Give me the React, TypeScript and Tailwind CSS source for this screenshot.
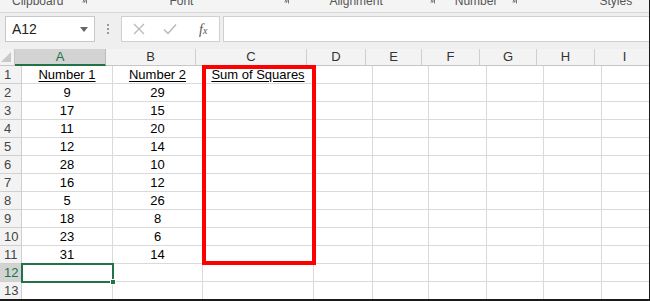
const colA = ["Number 1", "9", "17", "11", "12", "28", "16", "5", "18", "23", "31"];
const colB = ["Number 2", "29", "15", "20", "14", "10", "12", "26", "8", "6", "14"];
const letters = ["A", "B", "C", "D", "E", "F", "G", "H", "I"];
const widths = ["w-[91px]", "w-[90px]", "w-[111px]", "w-[59px]", "w-[56px]", "w-[58px]", "w-[57px]", "w-[58px]", "w-[60px]"];
const rows = Array.from({ length: 13 }, (_, i) => i + 1);

function Launcher() {
  return (
    <svg width="8" height="8" viewBox="0 0 8 8" className="mt-[1px]">
      <path d="M0.5 0.5h7v7" fill="none" stroke="#777" strokeWidth="1" />
      <path d="M2 2l4 4M3.5 6H6V3.5" fill="none" stroke="#777" strokeWidth="1" />
    </svg>
  );
}

function Corner() {
  return (
    <svg width="12" height="12" viewBox="0 0 12 12">
      <path d="M11 1V11H1Z" fill="#c8c8c8" />
    </svg>
  );
}

export default function App() {
  return (
    <div
      className="relative h-[301px] w-[650px] overflow-hidden bg-white border-r border-b-2 border-[#1a1a1a]"
      style={{ fontFamily: "'Liberation Sans', Arial, sans-serif" }}
    >
      {/* ribbon group labels, cut at top */}
      <div className="flex h-[13px] items-start overflow-hidden border-b border-[#d6d6d6] bg-[#f4f4f4] text-[12px] leading-[12px] text-[#555]">
        <div className="-mt-[5px] flex items-start">
          <span className="ml-[12px]">Clipboard</span>
          <span className="ml-[16px]"><Launcher /></span>
          <span className="ml-[82px]">Font</span>
          <span className="ml-[88px]"><Launcher /></span>
          <span className="ml-[40px]">Alignment</span>
          <span className="ml-[44px]"><Launcher /></span>
          <span className="ml-[20px]">Number</span>
          <span className="ml-[12px]"><Launcher /></span>
          <span className="ml-[82px]">Styles</span>
        </div>
      </div>

      {/* formula bar */}
      <div className="flex h-[36px] items-start bg-[#efefef] pt-[3px]">
        <div className="ml-[5px] flex h-[26px] w-[90px] items-center justify-between border border-[#c8c8c8] bg-white pl-[6px] pr-[6px] text-[14px] text-[#222]">
          <span>A12</span>
          <svg width="8" height="5" viewBox="0 0 8 5">
            <path d="M0 0h8L4 5z" fill="#666" />
          </svg>
        </div>
        <div className="ml-[12px] flex h-[26px] flex-col items-center justify-center gap-[2px]">
          <span className="h-[2px] w-[2px] bg-[#999]" />
          <span className="h-[2px] w-[2px] bg-[#999]" />
          <span className="h-[2px] w-[2px] bg-[#999]" />
        </div>
        <div className="ml-[12px] flex h-[26px] w-[99px] items-center border border-[#d0d0d0] bg-white">
          <svg width="12" height="12" viewBox="0 0 12 12" className="ml-[11px]">
            <path d="M1 1l10 10M11 1L1 11" stroke="#b8b8b8" strokeWidth="1.3" />
          </svg>
          <svg width="14" height="12" viewBox="0 0 14 12" className="ml-[18px]">
            <path d="M1 6.5l4 4L13 1.5" fill="none" stroke="#b8b8b8" strokeWidth="1.4" />
          </svg>
          <span
            className="ml-[22px] text-[14px] italic text-[#555]"
            style={{ fontFamily: "'Liberation Serif', serif" }}
          >
            f<span className="text-[10px]">x</span>
          </span>
        </div>
        <div className="ml-[3px] h-[26px] flex-1 border border-[#d0d0d0] border-r-0 bg-white" />
      </div>

      {/* column headers */}
      <div className="flex h-[17px] bg-[#f3f3f3] text-[13px] text-[#333]">
        <div className="flex w-[22px] items-end justify-end border-r border-b border-[#c6c6c6] pb-[2px] pr-[2px]">
          <Corner />
        </div>
        {letters.map((l, i) => (
          <div
            key={l}
            className={
              widths[i] +
              " flex shrink-0 items-center justify-center border-r " +
              (i === 0
                ? "border-[#bdbdbd] border-b-2 border-b-[#217346] bg-[#d3d3d3] text-[#217346]"
                : "border-[#cfcfcf] border-b border-b-[#c6c6c6]")
            }
          >
            {l}
          </div>
        ))}
      </div>

      {/* rows */}
      {rows.map((r) => (
        <div key={r} className="flex h-[18px] text-[13px] leading-[17px]">
          <div
            className={
              "flex w-[22px] shrink-0 items-center pl-[4px] border-r border-b border-[#d0d0d0] " +
              (r === 12 ? "bg-[#d3d3d3] text-[#217346]" : "bg-[#f3f3f3] text-[#444]")
            }
          >
            {r}
          </div>
          {letters.map((l, i) => {
            let text = "";
            if (l === "A" && r <= 11) text = colA[r - 1];
            if (l === "B" && r <= 11) text = colB[r - 1];
            if (l === "C" && r === 1) text = "Sum of Squares";
            return (
              <div
                key={l}
                className={
                  widths[i] +
                  " flex shrink-0 items-center justify-center border-r border-b border-[#dadada] text-black " +
                  (r === 1 ? "underline underline-offset-2" : "")
                }
              >
                {text}
              </div>
            );
          })}
        </div>
      ))}

      {/* red highlight box over C1:C11 */}
      <div className="pointer-events-none absolute left-[202px] top-[65px] h-[200px] w-[114px] border-4 border-[#ff0000]" />

      {/* active cell A12 */}
      <div className="pointer-events-none absolute left-[21px] top-[263px] h-[20px] w-[93px] border-2 border-[#217346]">
        <div className="absolute -bottom-[4px] -right-[4px] h-[6px] w-[6px] border border-white bg-[#217346]" />
      </div>
    </div>
  );
}
